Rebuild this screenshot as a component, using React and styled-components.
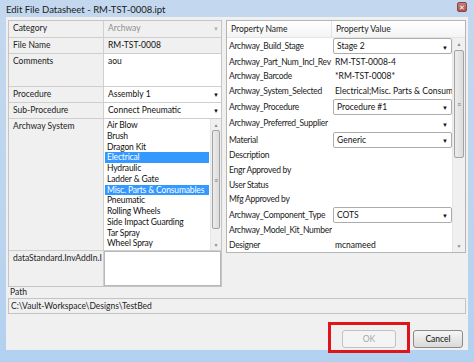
import React from "react";
import styled, { createGlobalStyle } from "styled-components";

const Global = createGlobalStyle`
  html, body { margin: 0; padding: 0; background: #bfd6ee; }
  body { font-family: Lato, "Noto Sans", sans-serif; font-size: 8.5px; color: #1b1b1b; }
  * { box-sizing: border-box; }
`;

const Window = styled.div`
  position: relative;
  width: 474px;
  height: 362px;
  display: flex;
  flex-direction: column;
  background: linear-gradient(#c3d8ee, #bcd4ee 60%, #b2d1f0);
  overflow: hidden;
`;

const TitleBar = styled.div`
  height: 17px;
  display: flex;
  align-items: center;
  justify-content: space-between;
  padding: 2px 7px 0 6px;
  font-size: 9.5px;
  color: #1a1a1a;
`;

const CloseBtn = styled.div`
  width: 10px;
  height: 10px;
  margin-top: -6px;
  border-radius: 2px;
  background: linear-gradient(#c77d78, #a9544e);
  border: 1px solid #8b4540;
  color: #fff;
  font-size: 7px;
  line-height: 8px;
  text-align: center;
`;

const Client = styled.div`
  margin: 0 6px;
  height: 333px;
  background: #f0f0f0;
  padding: 3px 2px 0 2px;
  display: flex;
  flex-direction: column;
`;

const Top = styled.div`
  display: flex;
  gap: 4px;
  align-items: flex-start;
`;

const LeftGrid = styled.div`
  width: 214px;
  display: grid;
  grid-template-columns: 94px 1fr;
  grid-template-rows: 16px 15px 32px 15px 15px 131px 35px;
  gap: 1px;
  background: #cfcfcf;
  border: 1px solid #c4c4c4;
`;

const Label = styled.div`
  background: #f0f0f0;
  padding: 2px 4px 0 4px;
  white-space: nowrap;
  overflow: hidden;
  color: #222;
`;

const Value = styled.div`
  position: relative;
  background: ${(p) => (p.$ro ? "#f0f0f0" : "#fff")};
  color: ${(p) => (p.$disabled ? "#8f8f8f" : "#111")};
  padding: 2px 2px 0 4px;
  white-space: nowrap;
  overflow: hidden;
  display: flex;
  justify-content: space-between;
  border: ${(p) => (p.$box ? "1px solid #b8b8b8" : "none")};
`;

const Arrow = styled.span`
  font-size: 6px;
  color: ${(p) => (p.$disabled ? "#b0b0b0" : "#111")};
  margin-top: 2px;
`;

const ListBox = styled.div`
  background: #fff;
  display: flex;
  overflow: hidden;
`;

const Items = styled.div`
  flex: 1;
  padding: 1px 1px 0 1px;
  overflow: hidden;
`;

const Item = styled.div`
  height: 10.75px;
  line-height: 10.75px;
  padding-left: 2px;
  letter-spacing: -0.15px;
  white-space: nowrap;
  background: ${(p) => (p.$sel ? "#3399ff" : "transparent")};
  color: ${(p) => (p.$sel ? "#fff" : "#111")};
`;

const ScrollBar = styled.div`
  width: ${(p) => p.$w || 11}px;
  background: #f0f0f0;
  border-left: 1px solid #e6e6e6;
  display: flex;
  flex-direction: column;
  align-items: stretch;
`;

const ScrollArrow = styled.div`
  height: ${(p) => p.$h || 11}px;
  font-size: 5px;
  color: #8a8a8a;
  display: flex;
  align-items: center;
  justify-content: center;
`;

const Thumb = styled.div`
  height: ${(p) => p.$h}px;
  margin: 0 1px;
  border: 1px solid #a3a3a3;
  border-radius: 2px;
  background: linear-gradient(90deg, #ececec, #dcdcdc);
  display: flex;
  align-items: center;
  justify-content: center;
  font-size: 7px;
  color: #777;
`;

const Track = styled.div`
  flex: 1;
`;

const RightGrid = styled.div`
  width: 240px;
  height: 233px;
  background: #fff;
  border: 1px solid #b5b5b5;
  display: flex;
  flex-direction: column;
`;

const HeaderRow = styled.div`
  height: 17px;
  display: grid;
  grid-template-columns: 105px 1fr;
  border-bottom: 1px solid #e4e4e4;
  background: linear-gradient(#ffffff, #f4f4f4);
`;

const HeadCell = styled.div`
  padding: 3px 0 0 4px;
  border-right: ${(p) => (p.$div ? "1px solid #e2e2e2" : "none")};
  color: #222;
`;

const Body = styled.div`
  flex: 1;
  display: flex;
  overflow: hidden;
`;

const Rows = styled.div`
  flex: 1;
  overflow: hidden;
`;

const Row = styled.div`
  height: ${(p) => (p.$combo ? 16.6 : 14.6)}px;
  display: grid;
  grid-template-columns: 105px 1fr;
  align-items: center;
`;

const NameCell = styled.div`
  padding-left: 2px;
  letter-spacing: -0.27px;
  white-space: nowrap;
  overflow: hidden;
  color: #222;
`;

const ValCell = styled.div`
  padding-left: 3px;
  white-space: nowrap;
  overflow: hidden;
  color: #111;
`;

const Combo = styled.div`
  height: 16px;
  margin-left: 1px;
  border: 1px solid ${(p) => (p.$faint ? "#fff" : "#acacac")};
  border-radius: 2px;
  background: #fff;
  display: flex;
  align-items: center;
  justify-content: space-between;
  padding: 0 3px 0 3px;
  color: #111;
`;

const PathLabel = styled.div`
  margin-top: 1px;
  padding-left: 2px;
  height: 9px;
  line-height: 9px;
  color: #222;
`;

const PathBox = styled.div`
  margin-top: 1px;
  height: 16px;
  border: 1px solid #c3c3c3;
  background: #f0f0f0;
  padding: 2px 0 0 2px;
  color: #222;
`;

const Buttons = styled.div`
  margin-top: 16px;
  display: flex;
  justify-content: flex-end;
  gap: 17px;
  padding-right: 3px;
`;

const Button = styled.div`
  width: ${(p) => p.$w}px;
  height: 18px;
  border-radius: 3px;
  display: flex;
  align-items: center;
  justify-content: center;
  border: 1px solid ${(p) => (p.$disabled ? "#c0c3c6" : "#8a8a8a")};
  background: ${(p) =>
    p.$disabled ? "#f4f4f4" : "linear-gradient(#f6f6f6, #e8e8e8 50%, #d9d9d9)"};
  color: ${(p) => (p.$disabled ? "#a8a8a8" : "#111")};
`;

const Highlight = styled.div`
  position: absolute;
  left: 328px;
  top: 322px;
  width: 82px;
  height: 31px;
  border: 3px solid #e0141b;
`;

const BottomFrame = styled.div`
  flex: 1;
`;

const items = [
  "Air Blow",
  "Brush",
  "Dragon Kit",
  "Electrical",
  "Hydraulic",
  "Ladder & Gate",
  "Misc. Parts & Consumables",
  "Pneumatic",
  "Rolling Wheels",
  "Side Impact Guarding",
  "Tar Spray",
  "Wheel Spray",
  "Wiper Spray",
];
const selected = new Set(["Electrical", "Misc. Parts & Consumables"]);

const props = [
  { n: "Archway_Build_Stage", v: "Stage 2", combo: true },
  { n: "Archway_Part_Num_Incl_Rev", v: "RM-TST-0008-4" },
  { n: "Archway_Barcode", v: "*RM-TST-0008*" },
  { n: "Archway_System_Selected", v: "Electrical;Misc. Parts & Consumables" },
  { n: "Archway_Procedure", v: "Procedure #1", combo: true },
  { n: "Archway_Preferred_Supplier", v: "", combo: true, faint: true },
  { n: "Material", v: "Generic", combo: true },
  { n: "Description", v: "" },
  { n: "Engr Approved by", v: "" },
  { n: "User Status", v: "" },
  { n: "Mfg Approved by", v: "" },
  { n: "Archway_Component_Type", v: "COTS", combo: true },
  { n: "Archway_Model_Kit_Number", v: "" },
  { n: "Designer", v: "mcnameed" },
];

export default function App() {
  return (
    <>
      <Global />
      <Window>
        <TitleBar>
          <span>Edit File Datasheet - RM-TST-0008.ipt</span>
          <CloseBtn>✕</CloseBtn>
        </TitleBar>
        <Client>
          <Top>
            <LeftGrid>
              <Label>Category</Label>
              <Value $ro $disabled>
                <span>Archway</span>
                <Arrow $disabled>▼</Arrow>
              </Value>
              <Label>File Name</Label>
              <Value $ro>RM-TST-0008</Value>
              <Label>Comments</Label>
              <Value>aou</Value>
              <Label>Procedure</Label>
              <Value>
                <span>Assembly 1</span>
                <Arrow>▼</Arrow>
              </Value>
              <Label>Sub-Procedure</Label>
              <Value>
                <span>Connect Pneumatic</span>
                <Arrow>▼</Arrow>
              </Value>
              <Label>Archway System</Label>
              <ListBox>
                <Items>
                  {items.map((it) => (
                    <Item key={it} $sel={selected.has(it)}>
                      {it}
                    </Item>
                  ))}
                </Items>
                <ScrollBar>
                  <ScrollArrow>▲</ScrollArrow>
                  <Thumb $h={99}>≡</Thumb>
                  <Track />
                  <ScrollArrow>▼</ScrollArrow>
                </ScrollBar>
              </ListBox>
              <Label>dataStandard.InvAddIn.I</Label>
              <Value $box />
            </LeftGrid>
            <RightGrid>
              <HeaderRow>
                <HeadCell $div>Property Name</HeadCell>
                <HeadCell>Property Value</HeadCell>
              </HeaderRow>
              <Body>
                <Rows>
                  {props.map((p) => (
                    <Row key={p.n} $combo={p.combo}>
                      <NameCell>{p.n}</NameCell>
                      {p.combo ? (
                        <Combo $faint={p.faint}>
                          <span>{p.v}</span>
                          <Arrow>▼</Arrow>
                        </Combo>
                      ) : (
                        <ValCell>{p.v}</ValCell>
                      )}
                    </Row>
                  ))}
                </Rows>
                <ScrollBar $w={13}>
                  <ScrollArrow $h={12}>▲</ScrollArrow>
                  <Thumb $h={108}>≡</Thumb>
                  <Track />
                  <ScrollArrow $h={12}>▼</ScrollArrow>
                </ScrollBar>
              </Body>
            </RightGrid>
          </Top>
          <PathLabel>Path</PathLabel>
          <PathBox>C:\Vault-Workspace\Designs\TestBed</PathBox>
          <Buttons>
            <Button $w={54} $disabled>OK</Button>
            <Button $w={50}>Cancel</Button>
          </Buttons>
        </Client>
        <BottomFrame />
        <Highlight />
      </Window>
    </>
  );
}
